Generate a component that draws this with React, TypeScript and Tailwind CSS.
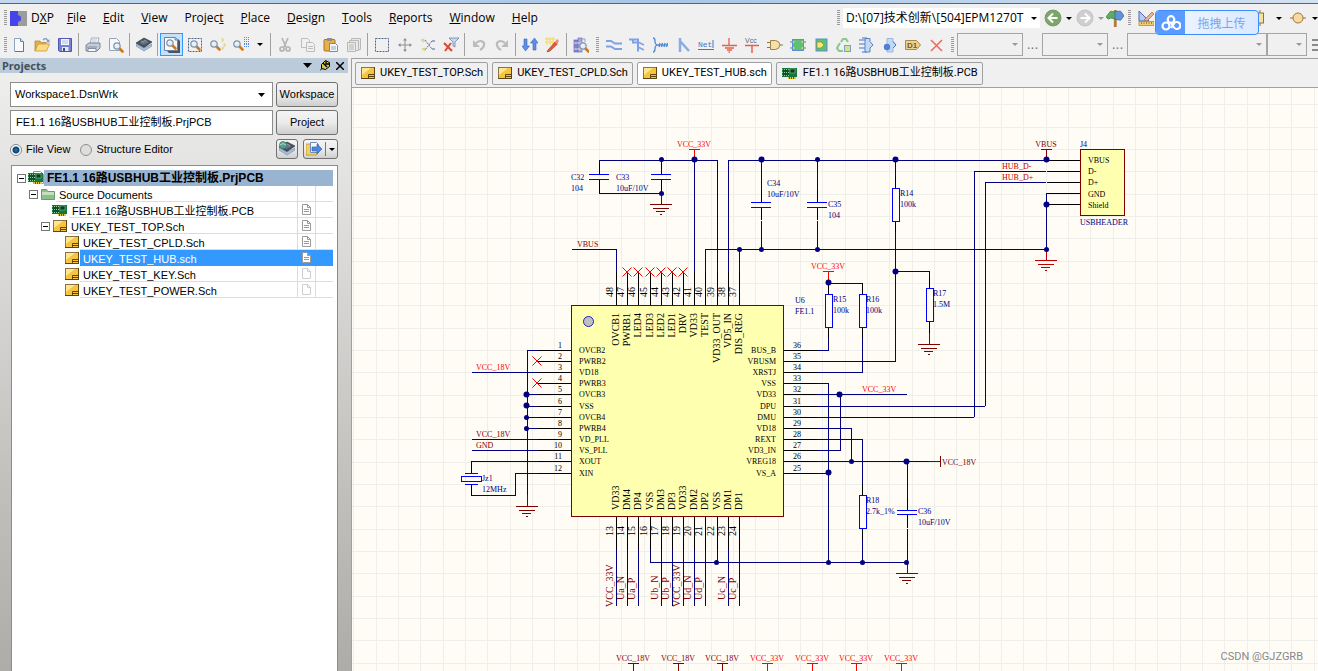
import type { ReactNode } from "react";

const NAVY = "#000080";
const MAROON = "#800000";
const RED = "#ff0000";
const CRIMSON = "#c00000";
const BLACK = "#000000";
const BLUE = "#0000ff";

/* ---------- toolbar icons, all on a 16x16 grid ---------- */

const magnifier = (x: number, y: number) => (
  <g transform={`translate(${x} ${y})`}>
    <path d="M6.5 6.5l3 3" stroke="#d07818" strokeWidth="2.6" strokeLinecap="round" />
    <circle cx="4" cy="4" r="3.2" fill="#e4effa" stroke="#8493a8" strokeWidth="1.2" />
    <path d="M2.5 3.5q.5-1.2 1.8-1.2" stroke="#fff" fill="none" />
  </g>
);

const icons: Record<string, ReactNode> = {
  new: (
    <g>
      <path d="M3.5 1.5h6l3 3v10h-9z" fill="#f7fafd" stroke="#8ea4be" />
      <path d="M9.5 1.5v3h3" fill="#d5e2ef" stroke="#6580a5" />
      <path d="M4 14.5h8.5V5" stroke="#5d7698" fill="none" />
    </g>
  ),
  open: (
    <g>
      <path d="M1 14V4h5l1 1.500h5V8H4z" fill="#e3b04a" stroke="#b98a34" strokeWidth=".8" />
      <path d="M1 14l3-7h11.500l-3 7z" fill="#fbdc80" stroke="#c8973c" strokeWidth=".8" />
      <path d="M9 3q3-3 5 1" stroke="#7d9dc4" strokeWidth="1.300" fill="none" />
      <path d="M15.500 2v3.500H12z" fill="#7d9dc4" />
    </g>
  ),
  save: (
    <g>
      <path d="M1.500 1.500h13v13h-12l-1-1z" fill="#7781d8" stroke="#4f58b0" />
      <rect x="4" y="2" width="8" height="6" fill="#f3f6fb" />
      <path d="M5 4h6M5 6h6" stroke="#b5bdd2" />
      <rect x="5" y="10" width="6.500" height="4" fill="#e5e9f4" />
      <rect x="6" y="11" width="2" height="3" fill="#3d4590" />
    </g>
  ),
  print: (
    <g>
      <path d="M5 7l1.500-6H14l-1.500 6z" fill="#fff" stroke="#94a3b5" strokeWidth=".9" />
      <path d="M7 3h5M6.500 5h5" stroke="#b4bfcc" />
      <path d="M1 8l3-2h11v5l-3 3H1z" fill="#c3ccd8" stroke="#6f7f94" strokeWidth=".9" />
      <path d="M2 10h10M3 14.500h8v-3H3z" stroke="#7a8798" fill="#f5f8fb" strokeWidth=".9" />
    </g>
  ),
  preview: (
    <g>
      <path d="M1.500 1.500h7l3 3v9h-10z" fill="#f7fafd" stroke="#94a4b8" />
      {magnifier(5, 5)}
    </g>
  ),
  layers: (
    <g>
      <path d="M0 9l8 5 8-5v-2l-8 4-8-4z" fill="#a8c0da" stroke="#7089a6" strokeWidth=".6" />
      <path d="M0 6l8-5 8 4-8 5.500z" fill="#46505c" stroke="#2b333d" strokeWidth=".6" />
      <path d="M3 6l5-3 5 2-5 3z" fill="#66717e" />
      <path d="M5 4l3 1M8 3l3 1.500" stroke="#aab4c0" strokeWidth=".7" />
    </g>
  ),
  fit: (
    <g>
      <path d="M3 2h11l2 2v12H5l-2-2z" fill="#4a5564" />
      <path d="M.5 .5h11l2 2v11H.5z" fill="#f5f9fd" stroke="#6f8196" />
      <path d="M11 .5v2.500h2.500" fill="#cfdbe8" stroke="#6f8196" />
      {magnifier(2, 2)}
    </g>
  ),
  zoomArea: (
    <g>
      <rect x="1.500" y="1.500" width="13" height="13" fill="none" stroke="#4c6288" strokeDasharray="2 1" />
      {magnifier(3, 3)}
    </g>
  ),
  zoomObjects: (
    <g>
      {magnifier(0, 3)}
      <path d="M12 1l2 2-2 2zM14 6l2 2-2 2zM12 10l2 1-2 2z" fill="#f5ef9e" stroke="#c9c07a" strokeWidth=".5" />
    </g>
  ),
  zoomFilter: (
    <g>
      {magnifier(0, 3)}
      <path d="M11.500 0v4M13.500 0v4M15.500 0v4" stroke="#35b565" strokeDasharray="1 1" />
      <path d="M11.500 4v3M13.500 4v3M15.500 4v3" stroke="#e05c4a" strokeDasharray="1 1" />
      <path d="M11.500 7v3M13.500 7v3M15.500 7v3" stroke="#5c86ee" strokeDasharray="1 1" />
    </g>
  ),
  cut: (
    <g stroke="#b4b4b4" fill="none" strokeWidth="1.700">
      <path d="M5 1l4 9M11 1L7 10" />
      <circle cx="5" cy="12" r="2" />
      <circle cx="11" cy="12" r="2" />
    </g>
  ),
  copy: (
    <g fill="#f1f1f1" stroke="#bcbcbc">
      <path d="M1.500 1.500h6l2 2v7h-8z" />
      <path d="M6.500 5.500h6l2 2v7h-8z" />
      <path d="M8 9.500h5M8 11.500h5" />
    </g>
  ),
  paste: (
    <g>
      <rect x="1" y="2.500" width="11" height="11.500" rx="1" fill="#e8ae48" stroke="#a87424" />
      <rect x="4" y="1" width="5" height="3" fill="#8c8f96" />
      <path d="M6.500 6.500h6l2 2v6h-8z" fill="#f3f7fc" stroke="#748cab" />
      <path d="M8 10h5M8 12h5" stroke="#93a7c0" />
    </g>
  ),
  rubber: (
    <g fill="#e9e9e9" stroke="#b8b8b8">
      <path d="M5.500 1.500h9v11h-9z" />
      <path d="M3.500 3.500h9v10h-9z" />
      <path d="M1.500 5.500h8v9h-8z" />
      <path d="M3 8h5M3 10h5M3 12h5" />
    </g>
  ),
  select: <rect x="1.500" y="1.500" width="13" height="13" fill="none" stroke="#50638c" strokeDasharray="2 1" />,
  move: (
    <g stroke="#8e8e8e" fill="#8e8e8e">
      <path d="M8 2v12M2 8h12" />
      <path d="M8 1l2 2.500H6zM8 15l2-2.500H6zM1 8l2.500-2v4zM15 8l-2.500-2v4z" stroke="none" />
    </g>
  ),
  deselect: (
    <g>
      <path d="M5 3l7 9M12 4l-7 9" stroke="#54699a" strokeDasharray="2 1" />
      <path d="M1 3l3-1v3zM2 12l3-1v3z" fill="#f4e982" stroke="#c4b850" strokeWidth=".5" />
      <path d="M12 3h3v2h-3zM12 11h3v2h-3z" fill="#9baac8" />
    </g>
  ),
  clearFilter: (
    <g>
      <path d="M6 1h10l-4 4v5l-2-1V5z" fill="#c7d9ee" stroke="#6987ad" strokeWidth=".8" />
      <path d="M1 6l8 8M8 6l-6 8" stroke="#df4630" strokeWidth="2" />
    </g>
  ),
  undo: (
    <g fill="none" stroke="#bbb" strokeWidth="2.200">
      <path d="M5 6q5-4 8 0 1 4-4 7" />
      <path d="M2 3v7h7z" fill="#bbb" stroke="none" />
    </g>
  ),
  redo: (
    <g fill="none" stroke="#bbb" strokeWidth="2.200">
      <path d="M11 6q-5-4-8 0-1 4 4 7" />
      <path d="M14 3v7H7z" fill="#bbb" stroke="none" />
    </g>
  ),
  hierarchy: (
    <g fill="#5e8ee6" stroke="#3a65bb" strokeWidth=".6">
      <path d="M2 2h3v7h2.500l-4 5-3.500-5h2z" />
      <path d="M11 13h3V6h2l-3.500-5-4 5H11z" />
    </g>
  ),
  probe: (
    <g>
      <path d="M2 0v8M5 0v8M8 0v8M0 2h10M0 5h10" stroke="#f8dc77" strokeWidth="1.300" />
      <path d="M3 13l7-8 2.500 2L5 14l-3 1z" fill="#e4573b" stroke="#a53623" strokeWidth=".6" />
      <path d="M10 5l2-3 2 2-2 3z" fill="#e98b76" />
    </g>
  ),
  library: (
    <g>
      <rect x="1" y="3" width="4" height="12" fill="#8588cf" stroke="#5b5fa8" strokeWidth=".6" />
      <rect x="5" y="1" width="4" height="14" fill="#a6a8df" stroke="#6266ad" strokeWidth=".6" />
      <path d="M9 2h3v3" stroke="#9aa0c8" fill="none" />
      <path d="M1 12h8M1 6h8" stroke="#fff" strokeWidth=".7" />
      {magnifier(6, 5)}
    </g>
  ),
  wire: <path d="M0 4h5l4 2.500h7M0 9.500h5l4 2.500h7" stroke="#7ea2e6" strokeWidth="2" fill="none" />,
  bus: (
    <g stroke="#7ea2e6" fill="none" strokeWidth="2">
      <path d="M0 2.500h9v12M4 2.500v3h5" />
      <path d="M9 5l6 3M9 10l6 3" strokeWidth="1.500" />
    </g>
  ),
  harness: (
    <g stroke="#4f87d8" fill="none" strokeWidth="1.300">
      <path d="M1 1q2 0 2 3v1q0 2 2 3-2 1-2 3v1q0 3-2 3" />
      <path d="M5 8h11" />
      <path d="M8 6l-1 4M10.500 6l-1 4M13 6l-1 4M15.500 6l-1 4" />
    </g>
  ),
  busEntry: <path d="M5 1v14M5 4l9 10" stroke="#8caae4" strokeWidth="2.500" fill="none" />,
  netLabel: (
    <g>
      <text x="0" y="10" fontSize="8" fill="#4776c2" fontFamily="Liberation Mono, monospace">
        Net
      </text>
      <path d="M0 12.500h16M15 3v8" stroke="#4776c2" />
    </g>
  ),
  gnd: <path d="M8 1v7M1 8.500h15M4 11h9M6 13h5M7.500 15h1.500" stroke="#e4604d" strokeWidth="1.300" fill="none" />,
  vcc: (
    <g>
      <text x="1" y="6" fontSize="7" fill="#5c6470" fontFamily="Liberation Sans, sans-serif">
        Vcc
      </text>
      <path d="M1 8.500h14M8 8.500V16" stroke="#e4604d" strokeWidth="1.500" />
    </g>
  ),
  part: (
    <g>
      <path d="M0 5.500h4M0 10.500h4M12 8h4" stroke="#8d7440" />
      <path d="M3.500 3.500h5q4 .5 4.500 4.500-.5 4-4.500 4.500h-5z" fill="#f6dfab" stroke="#a08245" />
    </g>
  ),
  sheetSymbol: (
    <g>
      <path d="M0 5h3M0 11h3M13 5h3M13 11h3" stroke="#4f78bd" />
      <rect x="2.500" y="2.500" width="11" height="11" fill="#5fbf72" stroke="#5c8fd0" />
      <path d="M3 4l2 1-2 1zM3 10l2 1-2 1zM13 4l-2 1 2 1zM13 10l-2 1 2 1z" fill="#f7e873" />
    </g>
  ),
  sheetEntry: (
    <g>
      <rect x="3" y="2" width="11" height="12" fill="#5fbf72" stroke="#5c8fd0" />
      <path d="M4 5h4l3 3-3 3H4z" fill="#f8ec70" stroke="#9a8e34" strokeWidth=".7" />
    </g>
  ),
  device: (
    <g>
      <path d="M5 5l2-3h3l2 3M4 6l-3 5 2 3h4" stroke="#8bc993" strokeWidth="2.200" fill="none" />
      <rect x="8.500" y="8.500" width="6" height="6" fill="#d6e57b" stroke="#7b9fd0" />
    </g>
  ),
  connector: (
    <g>
      <path d="M0 3h6M0 7h6M0 11h6M3 1h5M3 15h5" stroke="#4379c4" />
      <path d="M6 1.500h5v3l3 3.500-3 3v4H6z" fill="#c3d8f3" stroke="#5686c6" />
    </g>
  ),
  connectorEntry: (
    <g>
      <path d="M5 1.500h6v3l3 3.500-3 3v4H5z" fill="#c3d8f3" stroke="#9bb9e2" />
      <path d="M11 4.500l3 3.500-3 3" stroke="#4379c4" fill="none" />
      <circle cx="5" cy="10" r="3.200" fill="#4e7fd8" />
    </g>
  ),
  port: (
    <g>
      <path d="M.5 3.500h11l4 4.500-4 4.500H.5z" fill="#f1cf8e" stroke="#a88b4c" />
      <text x="2" y="11" fontSize="8" fontWeight="bold" fill="#6f5d33" fontFamily="Liberation Sans, sans-serif">
        D1
      </text>
    </g>
  ),
  noErc: <path d="M3 3l11 11M14 3L3 14" stroke="#ee6a58" strokeWidth="1.500" />,
  signpost: (
    <g>
      <rect x="7" y="1" width="2.500" height="15" fill="#b07a3c" />
      <path d="M0 7l4-5 6 1v6l-6-1-2 1z" fill="#60ab62" stroke="#3f7e42" strokeWidth=".7" />
      <path d="M8 2h5l3 4-3 4-5-1z" fill="#5e95d8" stroke="#3a67a3" strokeWidth=".7" />
    </g>
  ),
  drafting: (
    <g>
      <path d="M1 1v10h10z" fill="#b6cbef" stroke="#4a69ae" />
      <path d="M6 10l8-8 2 2-7 7z" fill="#e8b48c" stroke="#a76545" strokeWidth=".7" />
      <rect x="1" y="11.500" width="15" height="4" fill="#f3cd72" stroke="#b78a33" strokeWidth=".8" />
      <path d="M3.500 12v2M6 12v2M8.500 12v2M11 12v2M13.500 12v2" stroke="#8d6720" strokeWidth=".7" />
    </g>
  ),
  source: (
    <g>
      <path d="M0 8h16" stroke="#8d7440" />
      <circle cx="8" cy="8" r="5" fill="#f8d9a0" stroke="#a0783a" />
    </g>
  ),
  resistor: (
    <g>
      <path d="M8 0v16" stroke="#8d7440" />
      <rect x="4.500" y="3" width="7" height="10" fill="#f7e1a0" stroke="#8d7440" />
    </g>
  ),
  align: <path d="M0 3h16M0 8h16M0 13h16" stroke="#8a8a8a" strokeWidth="2" />,
};

function Icon({ name, className = "size-4" }: { name: string; className?: string }) {
  return (
    <svg viewBox="0 0 16 16" fill="none" className={`shrink-0 ${className}`} aria-hidden="true">
      {icons[name]}
    </svg>
  );
}

function Caret({ className = "text-black" }: { className?: string }) {
  return (
    <svg width="6" height="3" className={`shrink-0 ${className}`} aria-hidden="true">
      <path d="M0 0h6L3 3z" fill="currentColor" />
    </svg>
  );
}

function Grip({ className = "h-4" }: { className?: string }) {
  return (
    <span className="flex w-[10px] shrink-0 justify-center">
      <span
        className={`w-[3px] bg-[repeating-linear-gradient(to_bottom,#9a9a9a_0px,#9a9a9a_1px,transparent_1px,transparent_2px)] ${className}`}
      />
    </span>
  );
}

/* ---------- menu bar ---------- */

const menus = [
  ["", "F", "ile"],
  ["", "E", "dit"],
  ["", "V", "iew"],
  ["Projec", "t", ""],
  ["", "P", "lace"],
  ["", "D", "esign"],
  ["", "T", "ools"],
  ["", "R", "eports"],
  ["", "W", "indow"],
  ["", "H", "elp"],
];

function NavArrow({ flip, fill, label }: { flip?: boolean; fill: string; label: string }) {
  return (
    <button aria-label={label} className="shrink-0">
      <svg width="18" height="18" viewBox="0 0 18 18" className={flip ? "-scale-x-100" : ""}>
        <circle cx="9" cy="9" r="8" fill={fill} stroke={flip ? "#bdbdbd" : "#6f9460"} strokeWidth=".8" />
        <path d="M9 4.500L4.500 9 9 13.500M5 9h8.500" stroke="#fff" strokeWidth="2" fill="none" />
      </svg>
    </button>
  );
}

function MenuBar() {
  return (
    <div className="flex h-7 items-center overflow-hidden">
      <Grip />
      <svg width="17" height="15" className="shrink-0">
        <path d="M0 0h8v4q4 0 4 3.500T8 11v4H0z" fill="#4444ea" />
        <path d="M8 0h9v15H8v-4q3 0 3-3.500T8 4z" fill="#9c9c9c" />
      </svg>
      <nav className="ml-1 flex gap-[17px] font-['Open_Sans','Noto_Sans',sans-serif] text-[12px] text-black">
        <button className="-mr-1">
          D<u>X</u>P
        </button>
        {menus.map(([before, key, after]) => (
          <button key={before + key + after}>
            {before}
            <u>{key}</u>
            {after}
          </button>
        ))}
      </nav>
      <div className="ml-auto flex items-center">
        <Grip />
        <div className="flex h-5 w-[197px] items-center bg-white pr-[3px]">
          <input
            aria-label="Document path"
            defaultValue="D:\[07]技术创新\[504]EPM1270T"
            className="min-w-0 flex-1 pl-[3px] font-['Open_Sans','Noto_Sans_CJK_SC',sans-serif] text-[12px] outline-none"
          />
          <Caret />
        </div>
        <div className="flex w-[66px] items-center gap-1 pl-1">
          <NavArrow fill="#7ba669" label="Back" />
          <Caret />
          <NavArrow flip fill="#cfcfcf" label="Forward" />
          <Caret className="text-[#999]" />
        </div>
        <Icon name="signpost" className="size-[18px]" />
        <Grip />
        <Icon name="drafting" className="ml-1 size-4" />
        <span className="w-[98px]" />
        <Icon name="resistor" className="size-4" />
        <span className="flex w-[22px] justify-center">
          <Caret />
        </span>
        <Icon name="source" className="size-4" />
        <span className="flex w-3 justify-end overflow-hidden">
          <Caret />
        </span>
      </div>
    </div>
  );
}

/* ---------- tool bar ---------- */

const standardTools = [
  "new", "open", "save", "|", "print", "preview", "|", "layers", "|",
  "fit", "zoomArea", "zoomObjects", "zoomFilter", "v", "|",
  "cut", "copy", "paste", "rubber", "|",
  "select", "move", "deselect", "clearFilter", "|",
  "undo", "redo", "|", "hierarchy", "probe", "|", "library",
];

const wiringTools = [
  "wire", "bus", "harness", "busEntry", "netLabel", "gnd", "vcc", "part",
  "sheetSymbol", "sheetEntry", "device", "connector", "connectorEntry", "port", "noErc",
];

function ToolButton({ name }: { name: string }) {
  const active = name === "fit";
  return (
    <button
      aria-label={name}
      className={`flex h-[23px] w-[23px] shrink-0 items-center justify-center ${
        active ? "border border-[#3399ff] bg-[#c5e0fa]" : ""
      }`}
    >
      <Icon name={name} />
    </button>
  );
}

function DisabledCombo({ label, className }: { label: string; className: string }) {
  return (
    <span className={`relative flex h-[23px] shrink-0 items-center border border-[#a5a5a5] ${className}`}>
      <select disabled aria-label={label} className="h-full w-full appearance-none" />
      <span className="pointer-events-none absolute right-1">
        <Caret className="text-[#999]" />
      </span>
    </span>
  );
}

function Dots() {
  return <span className="w-[19px] shrink-0 text-center font-['Liberation_Sans',sans-serif] text-[14px] text-[#777]">...</span>;
}

function ToolBar() {
  return (
    <div className="flex h-[26px] items-center overflow-hidden pb-px">
      <span className="flex w-[7px] shrink-0">
        <Grip />
      </span>
      {standardTools.map((tool, i) => {
        if (tool === "|") {
          return (
            <span key={i} className="flex h-[23px] w-[5px] shrink-0 justify-center">
              <span className="w-px bg-[#a0a0a0]" />
            </span>
          );
        }
        if (tool === "v") {
          return (
            <button key={i} aria-label="More zoom tools" className="flex w-4 shrink-0 justify-center">
              <Caret />
            </button>
          );
        }
        return <ToolButton key={i} name={tool} />;
      })}
      <Grip />
      {wiringTools.map((tool) => (
        <ToolButton key={tool} name={tool} />
      ))}
      <Grip />
      <DisabledCombo label="Grid" className="w-[66px]" />
      <Dots />
      <DisabledCombo label="Color" className="w-[66px]" />
      <Dots />
      <DisabledCombo label="Font" className="w-[140px]" />
      <DisabledCombo label="Font size" className="w-10" />
      <Icon name="align" className="ml-[5px] size-4" />
    </div>
  );
}

/* ---------- projects panel ---------- */

function SheetIcon() {
  return (
    <svg width="14" height="12" className="shrink-0" aria-hidden="true">
      <rect x=".5" y=".5" width="13" height="11" fill="#f7c43c" stroke="#8a7440" />
      <path d="M1 1h9l-9 7z" fill="#fde793" />
      <path d="M0 11.500h14M13.500 0v12" stroke="#5c460f" />
      <path d="M7.500 11V7.500h6M8 9.500h5" stroke="#5c460f" fill="none" />
    </svg>
  );
}

function BoardIcon({ page }: { page?: boolean }) {
  return (
    <svg width="16" height="14" viewBox="0 0 16 14" className="shrink-0" aria-hidden="true">
      {page && <path d="M5.500 .5h7l3 3v9h-10z" fill="#fff" stroke="#7f9cc6" />}
      <rect x="0" y="2" width="15" height="9" fill="#16753a" />
      <path d="M2 3v7M4 3v7M6 3v7" stroke="#0b2c18" />
      <path d="M0 3.500h7M0 6.500h7M0 9.500h7" stroke="#8fd19b" strokeDasharray="1 1" />
      <rect x="8" y="3" width="5" height="4" fill="#0c3b1f" stroke="#7ed08d" strokeWidth=".6" />
      <rect x="6" y="11" width="8" height="2" fill="#e2c93c" />
      <path d="M7.500 11v2M9.500 11v2M11.500 11v2" stroke="#16753a" />
    </svg>
  );
}

function FolderIcon() {
  return (
    <svg width="14" height="12" className="shrink-0" aria-hidden="true">
      <path d="M.5 1.500h5l1.500 2h6.500v8H.5z" fill="#8dbf8b" stroke="#6f9a70" />
      <path d="M1 4h12v3H1z" fill="#c2e0bd" />
    </svg>
  );
}

function Toggle() {
  return (
    <button aria-label="Collapse" className="flex size-[9px] shrink-0 items-center justify-center border border-[#777] bg-white">
      <span className="h-px w-[5px] bg-black" />
    </button>
  );
}

function PageIcon({ lines }: { lines: boolean }) {
  const stroke = lines ? "#9a9a9a" : "#cfcfcf";
  return (
    <svg width="9" height="11" aria-hidden="true">
      <path d="M.5 .5h5l3 3v7h-8z M5.500 .5v3h3" fill="#fff" stroke={stroke} />
      {lines && <path d="M2 5.500h5M2 7.500h5" stroke={stroke} />}
    </svg>
  );
}

type Node = { label: string; icon: "folder" | "board" | "sheet"; indent: string; toggle?: boolean; page?: "full" | "blank"; selected?: boolean };

const nodes: Node[] = [
  { label: "Source Documents", icon: "folder", indent: "pl-[17px]", toggle: true },
  { label: "FE1.1 16路USBHUB工业控制板.PCB", icon: "board", indent: "pl-[40px]", page: "full" },
  { label: "UKEY_TEST_TOP.Sch", icon: "sheet", indent: "pl-[29px]", toggle: true, page: "full" },
  { label: "UKEY_TEST_CPLD.Sch", icon: "sheet", indent: "pl-[53px]", page: "full" },
  { label: "UKEY_TEST_HUB.sch", icon: "sheet", indent: "pl-[53px]", page: "full", selected: true },
  { label: "UKEY_TEST_KEY.Sch", icon: "sheet", indent: "pl-[53px]", page: "blank" },
  { label: "UKEY_TEST_POWER.Sch", icon: "sheet", indent: "pl-[53px]", page: "blank" },
];

function TreeRow({ node }: { node: Node }) {
  const line = node.selected ? "border-[#3399ff]" : "border-[#dcdcdc]";
  return (
    <li className={`flex h-4 items-center ${node.indent}`}>
      {node.toggle && (
        <span className="mr-[3px] flex">
          <Toggle />
        </span>
      )}
      {node.icon === "folder" && <FolderIcon />}
      {node.icon === "board" && <BoardIcon />}
      {node.icon === "sheet" && <SheetIcon />}
      <button
        className={`ml-px flex h-4 min-w-0 flex-1 items-center border-b pt-[3px] pl-[3px] whitespace-nowrap ${line} ${
          node.selected ? "bg-[#3399ff] text-white" : ""
        }`}
      >
        {node.label}
      </button>
      <span className={`flex h-4 w-[18px] items-center justify-center border-b border-l ${line} ${node.selected ? "bg-[#3399ff]" : ""}`}>
        {node.page && <PageIcon lines={node.page === "full"} />}
      </span>
      <span className={`h-4 w-[18px] border-b border-l ${line} ${node.selected ? "bg-[#3399ff]" : ""}`} />
    </li>
  );
}

const panelButton =
  "flex items-center justify-center rounded-[3px] border border-[#707070] bg-linear-to-b from-[#f4f4f4] via-[#ebebeb] to-[#cfcfcf]";

function ProjectsPanel() {
  return (
    <aside className="flex w-[351px] shrink-0 flex-col bg-linear-to-b from-[#f0f0ef] to-[#aeaca8] font-['Liberation_Sans','Noto_Sans_CJK_SC',sans-serif] text-[11px] text-black">
      <header className="mr-[3px] flex h-[15px] items-center bg-[#bccbda] pr-1 pl-[2px]">
        <h2 className="flex-1 font-['Noto_Sans',sans-serif] text-[11px] leading-none font-bold text-[#45515e]">Projects</h2>
        <button aria-label="Panel menu" className="mr-2">
          <svg width="9" height="5">
            <path d="M0 0h9L4.500 5z" />
          </svg>
        </button>
        <button aria-label="Pin" className="mr-[6px]">
          <svg width="10" height="11" viewBox="0 0 10 11">
            <path d="M0 10.500l3-3" stroke="#000" />
            <path d="M1.500 4.500l4-4 4 2v4l-4 3-4-1z" fill="#d6c84e" stroke="#000" />
            <path d="M3 3l4 4M6 1v3h3" stroke="#000" strokeWidth="1.300" fill="none" />
          </svg>
        </button>
        <button aria-label="Close">
          <svg width="8" height="8">
            <path d="M0 0l8 8M8 0L0 8" stroke="#000" strokeWidth="1.500" />
          </svg>
        </button>
      </header>
      <div className="flex min-h-0 flex-1 flex-col pt-[9px] pr-[13px] pl-[10px]">
        <div className="grid grid-cols-[1fr_62px] gap-[3px]">
          <div className="relative flex h-[25px] items-center border border-[#8c8c8c] bg-white">
            <select aria-label="Workspace file" className="h-full w-full appearance-none pl-1 outline-none">
              <option>Workspace1.DsnWrk</option>
            </select>
            <span className="pointer-events-none absolute right-[7px]">
              <svg width="7" height="4">
                <path d="M0 0h7L3.500 4z" />
              </svg>
            </span>
          </div>
          <button className={panelButton}>Workspace</button>
          <input
            aria-label="Project file"
            defaultValue="FE1.1 16路USBHUB工业控制板.PrjPCB"
            className="h-[25px] min-w-0 border border-[#8c8c8c] bg-white px-[5px] pb-1 outline-none"
          />
          <button className={panelButton}>Project</button>
        </div>
        <div className="mt-1 flex h-5 items-center">
          <label className="flex items-center gap-1 pt-px">
            <input
              type="radio"
              name="view"
              defaultChecked
              className="size-3 appearance-none rounded-full border border-[#7a8792] bg-white checked:bg-[radial-gradient(circle,#1f76b8_0px,#123f66_3px,#fff_4px)]"
            />
            File View
          </label>
          <label className="ml-[10px] flex items-center gap-1 pt-px">
            <input type="radio" name="view" className="size-3 appearance-none rounded-full border border-[#8e8f8f] bg-[#dedede]" />
            Structure Editor
          </label>
          <button aria-label="Compile" className={`ml-auto h-5 w-[22px] ${panelButton}`}>
            <svg viewBox="0 0 16 16" className="size-4">
              {icons.layers}
              <circle cx="4" cy="4" r="3.500" fill="#58a768" stroke="#3d74a8" strokeWidth=".7" />
              <path d="M1 4q3-3 6 0" stroke="#a9d8f2" fill="none" />
            </svg>
          </button>
          <button aria-label="Project options" className={`ml-[5px] h-5 w-[35px] gap-[3px] ${panelButton}`}>
            <svg viewBox="0 0 16 16" className="size-4 shrink-0">
              <path d="M0 3h5l1 2h5v9H0z" fill="#f5cf62" stroke="#b38a2c" strokeWidth=".7" />
              <path d="M4.500 1.500h6l2 2v8h-8z" fill="#f7fafe" stroke="#6d8bb8" />
              <path d="M6 6h5V3l5 5-5 5v-3H6z" fill="#4f86df" stroke="#2c59a5" strokeWidth=".6" />
            </svg>
            <span className="h-[14px] w-px bg-[#777]" />
            <Caret />
          </button>
        </div>
        <ul className="mt-[6px] ml-px min-h-0 flex-1 border border-b-0 border-[#8c8c8c] bg-white pt-1 pr-1">
          <li className="flex h-4 items-center pl-[5px]">
            <Toggle />
            <span className="ml-[2px] flex">
              <BoardIcon page />
            </span>
            <button className="flex h-4 min-w-0 flex-1 items-center bg-[#99b4d1] pl-[3px] text-[12px] leading-4 font-bold whitespace-nowrap">
              FE1.1 16路USBHUB工业控制板.PrjPCB
            </button>
          </li>
          {nodes.map((node) => (
            <TreeRow key={node.label} node={node} />
          ))}
        </ul>
      </div>
    </aside>
  );
}

/* ---------- document tabs ---------- */

const tabs = [
  { label: "UKEY_TEST_TOP.Sch" },
  { label: "UKEY_TEST_CPLD.Sch" },
  { label: "UKEY_TEST_HUB.sch", active: true },
  { label: "FE1.1 16路USBHUB工业控制板.PCB", board: true },
];

function DocumentTabs() {
  return (
    <div className="flex h-[29px] items-center gap-1 overflow-hidden border-b border-[#a0a0a0] pl-[3px]">
      {tabs.map((tab) => (
        <button
          key={tab.label}
          className={`flex h-[23px] shrink-0 items-center gap-[5px] rounded-[2px] border border-[#a0a0a0] pr-1 pl-[5px] font-['Roboto','Noto_Sans_CJK_SC',sans-serif] text-[11px] text-black ${
            tab.active ? "bg-white" : "bg-[#f0f0f0]"
          }`}
        >
          {tab.board ? <BoardIcon /> : <SheetIcon />}
          {tab.label}
        </button>
      ))}
    </div>
  );
}

/* ---------- schematic sheet ---------- */

const pinY = [350, 361, 372, 383, 394, 406, 417, 428, 439, 450, 461, 473];
const pinX = [616, 627, 638, 650, 661, 672, 683, 694, 705, 717, 728, 739];

const leftPins = ["OVCB2", "PWRB2", "VD18", "PWRB3", "OVCB3", "VSS", "OVCB4", "PWRB4", "VD_PLL", "VS_PLL", "XOUT", "XIN"];
const rightPins = ["BUS_B", "VBUSM", "XRSTJ", "VSS", "VD33", "DPU", "DMU", "VD18", "REXT", "VD3_IN", "VREG18", "VS_A"];
const topPins = ["OVCB1", "PWRB1", "LED4", "LED3", "LED2", "LED1", "DRV", "VD33", "TEST", "VD33_OUT", "VD5_IN", "DIS_REG"];
const bottomPins = ["VD33", "DM4", "DP4", "VSS", "DM3", "DP3", "VD33", "DM2", "DP2", "VSS", "DM1", "DP1"];
const bottomNets = ["VCC_33V", "Ua_N", "Ua_P", "", "Ub_N", "Ub_P", "VCC_33V", "Ud_N", "Ud_P", "", "Uc_N", "Uc_P"];

const wires = [
  "M599 160H717V272M599 193H661M694 160V272",
  "M572 249H616V272",
  "M705 272V249H1046M739 249V272M728 272V160H1046",
  "M599 160V163M661 160V163M661 190V193",
  "M761 160V190M761 221V249M817 160V190M817 221V249",
  "M895 160V177M895 232V361H817M895 271H929V278",
  "M828 283H862M828 338V350H817M862 338V372H817",
  "M974 417V171H1046M985 406V182H1046M974 417H817M985 406H817",
  "M1046 193V249",
  "M538 350H527V495M538 394H527M538 406H527M538 417H527M538 428H527",
  "M472 372H538M472 439H538M472 450H538M471 461H538M538 473H515V495H471",
  "M817 383H828V562M817 394H907M817 450H840V394M817 428H851V461M817 461H929",
  "M817 439H862V484M862 540V562M817 473H828M907 461V498M907 529V562",
  "M650 550V562H907M717 550V562",
];

const leads = [
  "M599 163V174M599 179V193M661 163V174M661 179V190",
  "M761 190V202M761 207V220M817 190V202M817 207V220",
  "M895 177V188M895 221V232M929 278V288M929 322V333",
  "M828 283V294M828 327V338M862 283V294M862 327V338",
  "M1047 160H1080M1047 171H1080M1047 182H1080M1047 193H1080M1047 204H1080",
  "M471 461V473M471 484V495",
  "M862 484V495M862 529V540M907 498V510M907 514V528",
];

const junctions = [
  [661, 159, 2.5], [694, 159, 3], [661, 193, 2.5], [739, 249, 2.5],
  [761, 159, 3], [817, 159, 2.5], [895, 159, 3], [761, 249, 2.5], [817, 249, 2.5],
  [895, 271, 3], [828, 282, 3], [1046, 159, 3], [1046, 204, 3], [1046, 249, 2.5],
  [526, 394, 3], [526, 405, 3], [526, 417, 2.5], [526, 428, 2.5],
  [839, 394, 3], [851, 461, 2.5], [906, 461, 3], [828, 472, 3],
  [828, 562, 2.5], [862, 562, 2.5], [906, 562, 2.5], [716, 562, 2.5],
];

const resistors = [
  [892, 188], [825, 294], [859, 294], [926, 288], [859, 495],
];

const capacitors = [
  [599, 174, 5], [661, 174, 5], [761, 202, 5], [817, 202, 5], [907, 510, 4],
];

const labels: [number, number, string, string][] = [
  [571, 180, "C32", NAVY],
  [571, 191, "104", NAVY],
  [616, 180, "C33", NAVY],
  [616, 191, "10uF/10V", NAVY],
  [577, 247, "VBUS", MAROON],
  [767, 186, "C34", NAVY],
  [767, 197, "10uF/10V", NAVY],
  [828, 207, "C35", NAVY],
  [828, 218, "104", NAVY],
  [900, 196, "R14", NAVY],
  [900, 207, "100k", NAVY],
  [933, 296, "R17", NAVY],
  [933, 307, "1.5M", NAVY],
  [795, 303, "U6", NAVY],
  [795, 314, "FE1.1", NAVY],
  [833, 302, "R15", NAVY],
  [833, 313, "100k", NAVY],
  [866, 302, "R16", NAVY],
  [866, 313, "100k", NAVY],
  [1002, 169, "HUB_D-", CRIMSON],
  [1002, 180, "HUB_D+", CRIMSON],
  [1080, 147, "J4", NAVY],
  [1080, 225, "USBHEADER", NAVY],
  [1088, 163, "VBUS", BLACK],
  [1088, 174, "D-", BLACK],
  [1088, 185, "D+", BLACK],
  [1088, 197, "GND", BLACK],
  [1088, 208, "Shield", BLACK],
  [476, 370, "VCC_18V", RED],
  [476, 437, "VCC_18V", MAROON],
  [476, 448, "GND", MAROON],
  [482, 481, "Jz1", NAVY],
  [482, 492, "12MHz", NAVY],
  [862, 392, "VCC_33V", RED],
  [942, 465, "VCC_18V", MAROON],
  [866, 503, "R18", NAVY],
  [866, 514, "2.7k_1%", NAVY],
  [918, 514, "C36", NAVY],
  [918, 525, "10uF/10V", NAVY],
];

const powerPorts: [number, number, string, string][] = [
  [694, 149, "VCC_33V", RED],
  [828, 271, "VCC_33V", RED],
  [1046, 149, "VBUS", MAROON],
  [633, 663, "VCC_18V", MAROON],
  [678, 663, "VCC_18V", MAROON],
  [722, 663, "VCC_18V", MAROON],
  [767, 663, "VCC_33V", RED],
  [812, 663, "VCC_33V", RED],
  [856, 663, "VCC_33V", RED],
  [901, 663, "VCC_33V", RED],
];

const grounds: [number, number, string][] = [
  [661, 193, MAROON],
  [929, 333, MAROON],
  [1046, 249, CRIMSON],
  [527, 495, MAROON],
  [907, 562, MAROON],
];

const noConnects = [...pinX.slice(1, 7).map((x) => [x, 272]), [537, 361], [537, 383]];

function VerticalText({ x, y, end, fill, children }: { x: number; y: number; end?: boolean; fill?: string; children: ReactNode }) {
  return (
    <text transform={`translate(${x} ${y}) rotate(-90)`} textAnchor={end ? "end" : "start"} fill={fill} fontSize="10">
      {children}
    </text>
  );
}

function Schematic() {
  return (
    <svg className="absolute inset-0 h-full w-full font-['Liberation_Serif',serif]" role="img" aria-label="USB hub schematic">
      <defs>
        <pattern id="grid" width="67" height="67" patternUnits="userSpaceOnUse" x="1" y="16">
          <path d="M.5 0V67M23.500 0V67M45.500 0V67M0 .5H67M0 23.500H67M0 45.500H67" stroke="#eeeeea" />
        </pattern>
      </defs>
      <rect width="100%" height="100%" fill="url(#grid)" />
      {/* sheet coordinates start at the upper left of the window */}
      <g transform="translate(-352 -88)" fontSize="8">
        <g fill="none" shapeRendering="crispEdges" transform="translate(.4 .4)">
          <rect x="571" y="305" width="212" height="211" fill="#ffffb0" stroke={MAROON} />
          <rect x="1080" y="149" width="44" height="66" fill="#ffffb0" stroke={MAROON} />
          {wires.map((d) => (
            <path key={d} d={d} stroke={NAVY} />
          ))}
          {leads.map((d) => (
            <path key={d} d={d} stroke={BLACK} />
          ))}
          {pinY.map((y) => (
            <path key={y} d={`M538 ${y}H571M784 ${y}H817`} stroke={BLACK} />
          ))}
          {pinX.map((x, i) => (
            <g key={x}>
              <path d={`M${x} 272V305M${x} 517V550`} stroke={BLACK} />
              {bottomNets[i] && <path d={`M${x} 550V606`} stroke={NAVY} />}
            </g>
          ))}
          {resistors.map(([x, y]) => (
            <rect key={`${x}-${y}`} x={x} y={y} width="7" height="33" fill="#fffcf6" stroke={BLUE} />
          ))}
          {capacitors.map(([x, y, gap]) => (
            <path key={x} d={`M${x - 10} ${y}h20M${x - 10} ${y + gap}h20`} stroke={BLUE} />
          ))}
          <path d="M465 473h13M465 484h13M461 476h20v5h-20z" stroke={BLUE} />
          {grounds.map(([x, y, color]) => (
            <path
              key={`${x}-${y}`}
              d={`M${x} ${y}v11M${x - 11} ${y + 11}h22M${x - 8} ${y + 15}h16M${x - 5} ${y + 18}h9M${x - 1} ${y + 21}h2`}
              stroke={color}
            />
          ))}
          {powerPorts.map(([x, y, , color]) => (
            <path key={`${x}-${y}`} d={`M${x - 5} ${y}h11M${x} ${y}v10`} stroke={color} />
          ))}
          <path d="M929 461h11M940 456v11" stroke={MAROON} />
        </g>

        <g transform="translate(.5 .5)">
          {junctions.map(([x, y, r]) => (
            <circle key={`${x}-${y}`} cx={x} cy={y} r={r} fill={NAVY} />
          ))}
          {noConnects.map(([x, y]) => (
            <path key={`${x}-${y}`} d={`M${x - 5} ${y - 5}l9 9M${x + 4} ${y - 5}l-9 9`} stroke={RED} />
          ))}
          <circle cx="588" cy="321" r="5" fill="#c0c0c0" stroke="#2020c0" />
        </g>

        {pinY.map((y, i) => (
          <g key={y}>
            <text x="579" y={y + 3}>{leftPins[i]}</text>
            <text x="562" y={y - 2} textAnchor="end">{i + 1}</text>
            <text x="776" y={y + 3} textAnchor="end">{rightPins[i]}</text>
            <text x="793" y={y - 2}>{36 - i}</text>
          </g>
        ))}
        {pinX.map((x, i) => (
          <g key={x}>
            <VerticalText x={x - 3} y={297}>{48 - i}</VerticalText>
            <VerticalText x={x + 3} y={313} end>{topPins[i]}</VerticalText>
            <VerticalText x={x + 3} y={510}>{bottomPins[i]}</VerticalText>
            <VerticalText x={x - 3} y={536}>{13 + i}</VerticalText>
            {bottomNets[i] && (
              <VerticalText x={x - 3} y={bottomNets[i] === "VCC_33V" ? 607 : 600} fill={MAROON}>
                {bottomNets[i]}
              </VerticalText>
            )}
          </g>
        ))}
        {labels.map(([x, y, text, color]) => (
          <text key={`${x}-${y}`} x={x} y={y} fill={color}>{text}</text>
        ))}
        {powerPorts.map(([x, y, text, color]) => (
          <text key={`${x}-${y}`} x={x} y={y - 2} fill={color} textAnchor="middle">{text}</text>
        ))}
      </g>
    </svg>
  );
}

export default function App() {
  return (
    <div className="relative flex h-screen flex-col overflow-hidden bg-[#f0f0f0]">
      <div className="h-1 shrink-0 border-b border-[#56657a] bg-linear-to-r from-[#c3d8ee] via-[#a9c6e6] to-[#d3e2f2]" />
      <MenuBar />
      <ToolBar />
      <div className="flex min-h-0 flex-1">
        <ProjectsPanel />
        <main className="flex min-w-0 flex-1 flex-col border-t border-l border-[#a0a0a0]">
          <DocumentTabs />
          <div className="relative min-h-0 flex-1 overflow-hidden bg-[#fffcf6]">
            <Schematic />
            <span className="absolute right-[15px] bottom-[6px] font-['Roboto',sans-serif] text-[11px] leading-4 text-[#888]">
              CSDN @GJZGRB
            </span>
          </div>
        </main>
      </div>

      {/* floating upload widget */}
      <button className="absolute top-[10px] right-[59px] flex h-[25px] w-[104px] items-center overflow-hidden rounded border border-[#3b8cff] bg-linear-to-r from-[#f2f7ff] to-[#dbe9ff] font-['Noto_Sans_CJK_SC',sans-serif] text-[12px] text-[#7ba3ec]">
        <span className="flex h-full w-[29px] items-center justify-center bg-[#5b9bff]">
          <svg width="20" height="16" viewBox="0 0 20 16" fill="none" stroke="#fff" strokeWidth="2.200">
            <circle cx="10" cy="4.500" r="3.300" />
            <circle cx="5" cy="11" r="3.500" />
            <path d="M10 8l3 4.500a3.500 3.500 0 1 0 0-4L10 13" />
          </svg>
        </span>
        <span className="flex-1 text-center">拖拽上传</span>
      </button>
    </div>
  );
}
